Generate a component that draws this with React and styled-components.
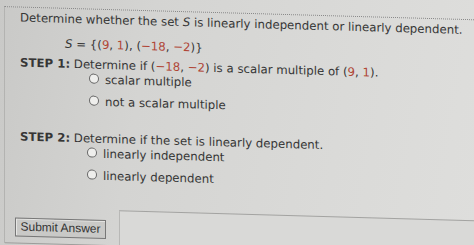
import React from "react";
import styled, { createGlobalStyle } from "styled-components";

const Global = createGlobalStyle`
  html, body { margin: 0; padding: 0; }
  body { background: #d3d3d1; overflow: hidden; }
`;

const Page = styled.div`
  width: 474px;
  height: 245px;
  overflow: hidden;
  background: linear-gradient(100deg, #c9c9c7 0%, #d4d4d2 30%, #dadad8 70%, #dededc 100%);
  font-family: "DejaVu Sans", Verdana, sans-serif;
  color: #363636;
`;

const Tilt = styled.div`
  transform: skewY(1.6deg);
  transform-origin: 0 0;
  padding-top: 6px;
`;

const Panel = styled.div`
  margin-left: 4px;
  border-left: 1px solid #b3b3b1;
  border-top: 1px dotted #8a8a8a;
  height: 236px;
  display: flex;
  flex-direction: column;
`;

const Line = styled.div`
  font-size: 11.75px;
  line-height: 15px;
  white-space: nowrap;
  padding-left: ${(p) => p.$indent || 15}px;
  margin-top: ${(p) => p.$top || 0}px;
`;

const Num = styled.span`
  color: #b04636;
`;

const Var = styled.span`
  font-style: italic;
`;

const Bold = styled.b`
  font-weight: bold;
`;

const Options = styled.div`
  display: flex;
  flex-direction: column;
  gap: ${(p) => p.$gap}px;
  padding-left: ${(p) => p.$indent}px;
  margin-top: ${(p) => p.$top}px;
`;

const Option = styled.label`
  display: flex;
  align-items: center;
  gap: 6px;
  font-size: 11.75px;
  line-height: 15px;
  white-space: nowrap;
`;

const Radio = styled.span`
  width: 8px;
  height: 8px;
  border-radius: 50%;
  border: 1.5px solid #666;
  background: #eeeeec;
  flex: none;
  margin-top: -3px;
`;

const Footer = styled.div`
  margin-top: auto;
  display: flex;
  align-items: flex-start;
  height: 36px;
`;

const ButtonCell = styled.div`
  width: 114px;
  height: 36px;
  border-bottom: 1px solid #9c9c9a;
  padding: 8px 0 0 10px;
  box-sizing: border-box;
`;

const SubmitButton = styled.button`
  font-family: "Liberation Sans", Arial, sans-serif;
  font-size: 12px;
  color: #333;
  background: #c9c9c7;
  border: 1px solid #777;
  box-shadow: inset 1px 1px 0 #e6e6e4;
  width: 91px;
  height: 19px;
  padding: 0;
  line-height: 17px;
`;

const AnswerBox = styled.div`
  flex: 1;
  height: 60px;
  border-top: 1px solid #a3a3a1;
  border-left: 1px solid #b8b8b6;
  background: #d9d9d7;
`;

export default function App() {
  return (
    <>
      <Global />
      <Page>
        <Tilt>
          <Panel>
            <Line $top={3}>
              Determine whether the set <Var>S</Var> is linearly independent or linearly dependent.
            </Line>
            <Line $indent={60} $top={10}>
              <Var>S</Var> = {"{"}(<Num>9</Num>, <Num>1</Num>), (<Num>−18</Num>, <Num>−2</Num>){"}"}
            </Line>
            <Line $top={5}>
              <Bold>STEP 1:</Bold> Determine if (<Num>−18</Num>, <Num>−2</Num>) is a scalar multiple of (<Num>9</Num>, <Num>1</Num>).
            </Line>
            <Options $indent={84} $gap={7} $top={0}>
              <Option><Radio />scalar multiple</Option>
              <Option><Radio />not a scalar multiple</Option>
            </Options>
            <Line $top={22}>
              <Bold>STEP 2:</Bold> Determine if the set is linearly dependent.
            </Line>
            <Options $indent={82} $gap={7} $top={0}>
              <Option><Radio />linearly independent</Option>
              <Option><Radio />linearly dependent</Option>
            </Options>
            <Footer>
              <ButtonCell>
                <SubmitButton>Submit Answer</SubmitButton>
              </ButtonCell>
              <AnswerBox />
            </Footer>
          </Panel>
        </Tilt>
      </Page>
    </>
  );
}
